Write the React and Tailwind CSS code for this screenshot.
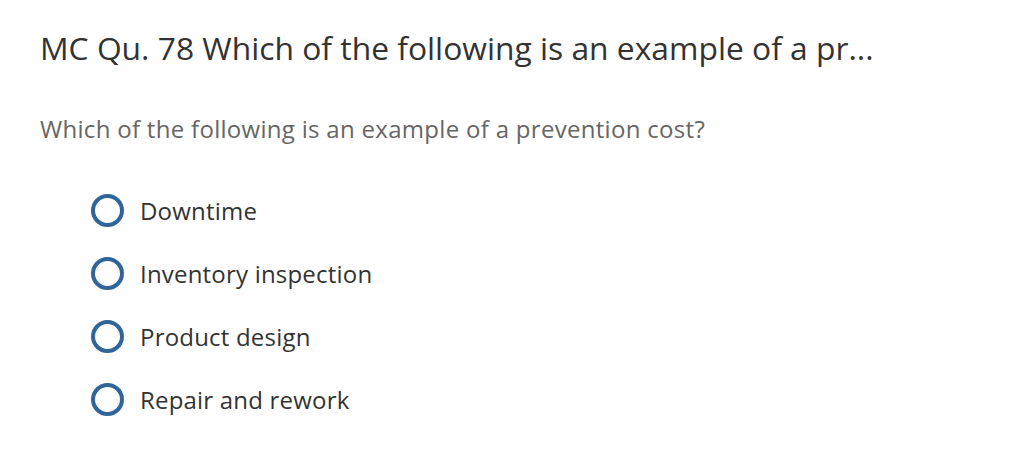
import React from "react";

const options = ["Downtime", "Inventory inspection", "Product design", "Repair and rework"];

export default function App() {
  return (
    <div className="w-[1024px] h-[465px] bg-white px-10 pt-[26px] font-['Open_Sans',sans-serif] overflow-hidden">
      <h1 className="text-[31.8px] leading-[44px] text-[#333333]">
        MC Qu. 78 Which of the following is an example of a pr...
      </h1>
      <p className="mt-[44px] text-[24px] leading-[30px] tracking-[0.3px] text-[#666666]">
        Which of the following is an example of a prevention cost?
      </p>
      <ul className="mt-[50px] ml-[51px] flex flex-col gap-[30px]">
        {options.map((opt) => (
          <li key={opt} className="flex items-center gap-[16px]">
            <span className="w-[33px] h-[33px] rounded-full border-4 border-[#2f6599] shrink-0" />
            <span className="text-[24px] leading-[33px] tracking-[0.2px] text-[#333333]">{opt}</span>
          </li>
        ))}
      </ul>
    </div>
  );
}
